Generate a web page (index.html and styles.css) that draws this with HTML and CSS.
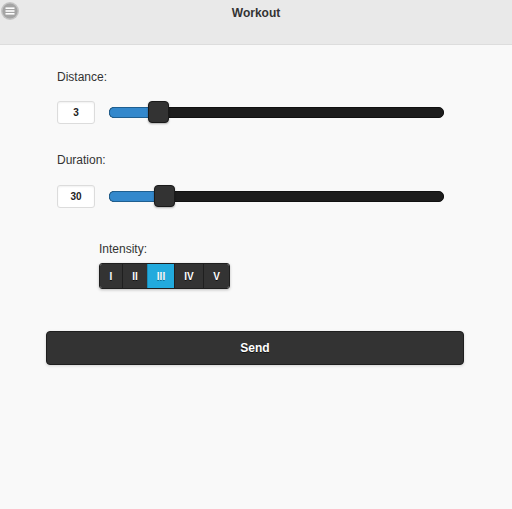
FILE: index.html
```html
<!DOCTYPE html>
<html>
<head>
<meta charset="utf-8">
<link rel="stylesheet" href="styles.css">
</head>
<body>
<header class="header">
  <span class="menu-icon">
    <svg width="18" height="18" viewBox="0 0 18 18"><circle cx="9" cy="9" r="9" fill="#c4c4c4"/><circle cx="9" cy="9" r="7.6" fill="#a4a4a4"/><rect x="4.5" y="5.4" width="9" height="1.6" fill="#fff"/><rect x="4.5" y="8.2" width="9" height="1.6" fill="#fff"/><rect x="4.5" y="11" width="9" height="1.6" fill="#fff"/></svg>
  </span>
  <h1 class="title">Workout</h1>
</header>
<main class="content">
  <div class="field">
    <label class="label">Distance:</label>
    <div class="slider-row">
      <div class="num">3</div>
      <div class="track">
        <div class="fill" style="width:49px"></div>
        <div class="handle" style="left:38px"></div>
      </div>
    </div>
  </div>
  <div class="field field2">
    <label class="label">Duration:</label>
    <div class="slider-row">
      <div class="num">30</div>
      <div class="track">
        <div class="fill" style="width:55px"></div>
        <div class="handle" style="left:44px"></div>
      </div>
    </div>
  </div>
  <div class="intensity">
    <label class="label">Intensity:</label>
    <div class="segments">
      <span class="seg s1">I</span><span class="seg s2">II</span><span class="seg s3 active">III</span><span class="seg s4">IV</span><span class="seg s5">V</span>
    </div>
  </div>
  <button class="send">Send</button>
</main>
</body>
</html>
```
FILE: styles.css
```css
* { box-sizing: border-box; }
html, body { margin: 0; padding: 0; }
body {
  background: #f9f9f9;
  font-family: "Liberation Sans", Arial, sans-serif;
  color: #333;
  width: 512px;
  height: 509px;
  overflow: hidden;
}
.header {
  position: relative;
  height: 45px;
  background: #e9e9e9;
  border-bottom: 1px solid #dddddd;
}
.menu-icon {
  position: absolute;
  left: 1px;
  top: 2px;
  width: 18px;
  height: 18px;
  display: block;
}
.menu-icon svg { display: block; }
.title {
  margin: 0;
  padding-top: 6px;
  text-align: center;
  font-size: 12px;
  line-height: 14px;
  font-weight: bold;
  color: #333;
}
.content {
  padding: 24px 0 0 0;
  display: flex;
  flex-direction: column;
}
.field {
  padding-left: 57px;
  display: flex;
  flex-direction: column;
  gap: 16px;
}
.field2 { margin-top: 28px; gap: 17px; }
.label {
  font-size: 12px;
  line-height: 16px;
  color: #333;
  display: block;
}
.slider-row {
  display: flex;
  align-items: center;
  gap: 14px;
  height: 23px;
}
.num {
  width: 38px;
  height: 23px;
  background: #fff;
  border: 1px solid #dcdcdc;
  border-radius: 3px;
  font-size: 10px;
  font-weight: bold;
  color: #222;
  text-align: center;
  line-height: 21px;
  box-shadow: inset 0 1px 2px rgba(0,0,0,0.06);
}
.track {
  position: relative;
  width: 335px;
  height: 11px;
  background: #1d1d1d;
  border: 1px solid #111;
  border-radius: 5px;
}
.fill {
  position: absolute;
  left: -1px;
  top: -1px;
  height: 11px;
  background: #3388cc;
  border: 1px solid #1f5f90;
  border-right: none;
  border-radius: 5px 0 0 5px;
}
.handle {
  position: absolute;
  top: -7px;
  width: 21px;
  height: 22px;
  background: #333;
  border: 1px solid #1a1a1a;
  border-radius: 4px;
  box-shadow: 0 1px 2px rgba(0,0,0,0.3);
}
.intensity {
  margin-top: 33px;
  padding-left: 99px;
  display: flex;
  flex-direction: column;
  gap: 6px;
}
.segments {
  display: flex;
  width: max-content;
  border-radius: 3px;
  overflow: hidden;
  box-shadow: 0 1px 3px rgba(0,0,0,0.25);
  border: 1px solid #1f1f1f;
}
.seg {
  height: 24px;
  display: flex;
  align-items: center;
  justify-content: center;
  background: #333;
  color: #fff;
  font-size: 10px;
  font-weight: bold;
  text-shadow: 0 1px 0 #111;
  border-left: 1px solid #1f1f1f;
}
.seg.s1 { border-left: none; width: 22px; }
.seg.s2 { width: 25px; }
.seg.s3 { width: 27px; }
.seg.s4 { width: 29px; }
.seg.s5 { width: 26px; }
.seg.active {
  background: #22aadd;
  border-left-color: #1a8cb8;
  text-shadow: 0 1px 0 #0f6d90;
}
.send {
  margin: 42px 0 0 46px;
  width: 418px;
  height: 34px;
  background: #333;
  border: 1px solid #1f1f1f;
  border-radius: 4px;
  color: #fff;
  font-family: "Liberation Sans", Arial, sans-serif;
  font-size: 12px;
  font-weight: bold;
  text-shadow: 0 1px 0 #111;
  box-shadow: 0 1px 3px rgba(0,0,0,0.15);
  padding: 0;
}
```
